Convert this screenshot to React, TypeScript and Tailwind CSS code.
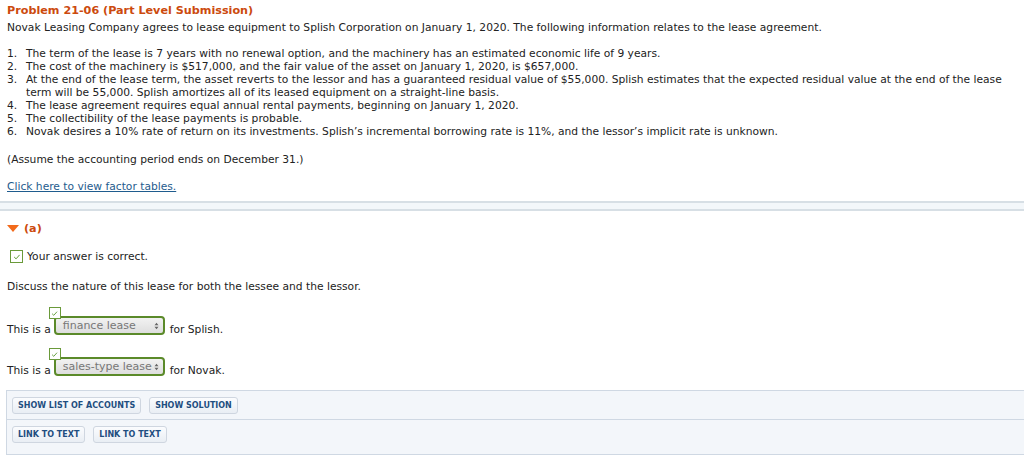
import React from 'react';

const items: string[] = [
  'The term of the lease is 7 years with no renewal option, and the machinery has an estimated economic life of 9 years.',
  'The cost of the machinery is $517,000, and the fair value of the asset on January 1, 2020, is $657,000.',
  'At the end of the lease term, the asset reverts to the lessor and has a guaranteed residual value of $55,000. Splish estimates that the expected residual value at the end of the lease term will be 55,000. Splish amortizes all of its leased equipment on a straight-line basis.',
  'The lease agreement requires equal annual rental payments, beginning on January 1, 2020.',
  'The collectibility of the lease payments is probable.',
  'Novak desires a 10% rate of return on its investments. Splish\u2019s incremental borrowing rate is 11%, and the lessor\u2019s implicit rate is unknown.',
];

const Check = ({ className }: { className: string }) => (
  <span className={`inline-flex items-center justify-center border border-[#6a9a3a] bg-white ${className}`}>
    <svg viewBox="0 0 10 10" className="w-[70%] h-[70%]">
      <path d="M1.5 5.2 L4 7.6 L8.6 2.4" fill="none" stroke="#5d9a35" strokeWidth="1.3" />
    </svg>
  </span>
);

const Choice = ({ value, who }: { value: string; who: string }) => (
  <div className="flex items-end h-[31px]">
    <span className="mb-[2px]">This is a</span>
    <div className="relative mb-[3px]">
      <Check className="absolute -top-[9px] -left-[2px] w-[12px] h-[12px]" />
      <div className="ml-[3px] w-[111px] h-[19px] rounded-[4px] border-2 border-[#5b8a2a] bg-gradient-to-b from-[#f2f2f2] to-[#dedede] flex items-center justify-between pl-[7px] pr-[4px] text-[#777] text-[11px]">
        <span className="leading-none">{value}</span>
        <svg viewBox="0 0 6 10" className="w-[5px] h-[8px]">
          <path d="M0.5 4 L3 1 L5.5 4 Z M0.5 6 L3 9 L5.5 6 Z" fill="#666" />
        </svg>
      </div>
    </div>
    <span className="ml-[5px] mb-[2px]">{who}</span>
  </div>
);

const Btn = ({ label }: { label: string }) => (
  <button className="h-[17px] px-[5px] rounded-[3px] border border-[#cfd6e0] bg-gradient-to-b from-[#fbfcfe] to-[#e9eef4] text-[8px] font-bold text-[#1f4e80]">
    {label}
  </button>
);

export default function App() {
  return (
    <div className="w-[1024px] h-[459px] overflow-hidden bg-white text-[10.7px] leading-[13px] text-[#222] font-['DejaVu_Sans',Verdana,sans-serif]">
      <div className="px-[7px] pt-[4px]">
        <div className="font-bold text-[#cc4a0e] text-[11.2px]">Problem 21-06 (Part Level Submission)</div>
        <p className="mt-[4px]">
          Novak Leasing Company agrees to lease equipment to Splish Corporation on January 1, 2020. The following information relates to the lease agreement.
        </p>
        <ol className="mt-[13px] pr-[10px]">
          {items.map((t, i) => (
            <li key={i} className="flex">
              <span className="w-[19px] shrink-0">{i + 1}.</span>
              <span>{t}</span>
            </li>
          ))}
        </ol>
        <p className="mt-[15px]">(Assume the accounting period ends on December 31.)</p>
        <a href="#" className="block mt-[14px] text-[#1f5c8e] underline w-fit">Click here to view factor tables.</a>
      </div>
      <div className="mt-[8px] h-[10px] border-y-2 border-[#d7dfe5] bg-[#f3f7fa]" />
      <div className="px-[7px]">
        <div className="mt-[11px] flex items-center gap-[5px] font-bold text-[#cc4a0e] text-[11.2px]">
          <svg viewBox="0 0 12 8" className="w-[12px] h-[8px]">
            <path d="M0 0 H12 L6 7 Z" fill="#f26a1b" />
          </svg>
          (a)
        </div>
        <div className="mt-[15px] ml-[3px] flex items-center gap-[4px]">
          <Check className="w-[13px] h-[13px]" />
          <span>Your answer is correct.</span>
        </div>
        <p className="mt-[17px]">Discuss the nature of this lease for both the lessee and the lessor.</p>
        <div className="mt-[14px]">
          <Choice value="finance lease" who="for Splish." />
          <div className="h-[10px]" />
          <Choice value="sales-type lease" who="for Novak." />
        </div>
      </div>
      <div className="ml-[6px] mt-[11px] border border-r-0 border-[#cfd8e3] bg-[#f3f6fa]">
        <div className="flex gap-[8px] px-[5px] pt-[6px] pb-[5px] border-b border-[#cfd8e3]">
          <Btn label="SHOW LIST OF ACCOUNTS" />
          <Btn label="SHOW SOLUTION" />
        </div>
        <div className="flex gap-[8px] px-[5px] pt-[6px] pb-[11px]">
          <Btn label="LINK TO TEXT" />
          <Btn label="LINK TO TEXT" />
        </div>
      </div>
    </div>
  );
}
